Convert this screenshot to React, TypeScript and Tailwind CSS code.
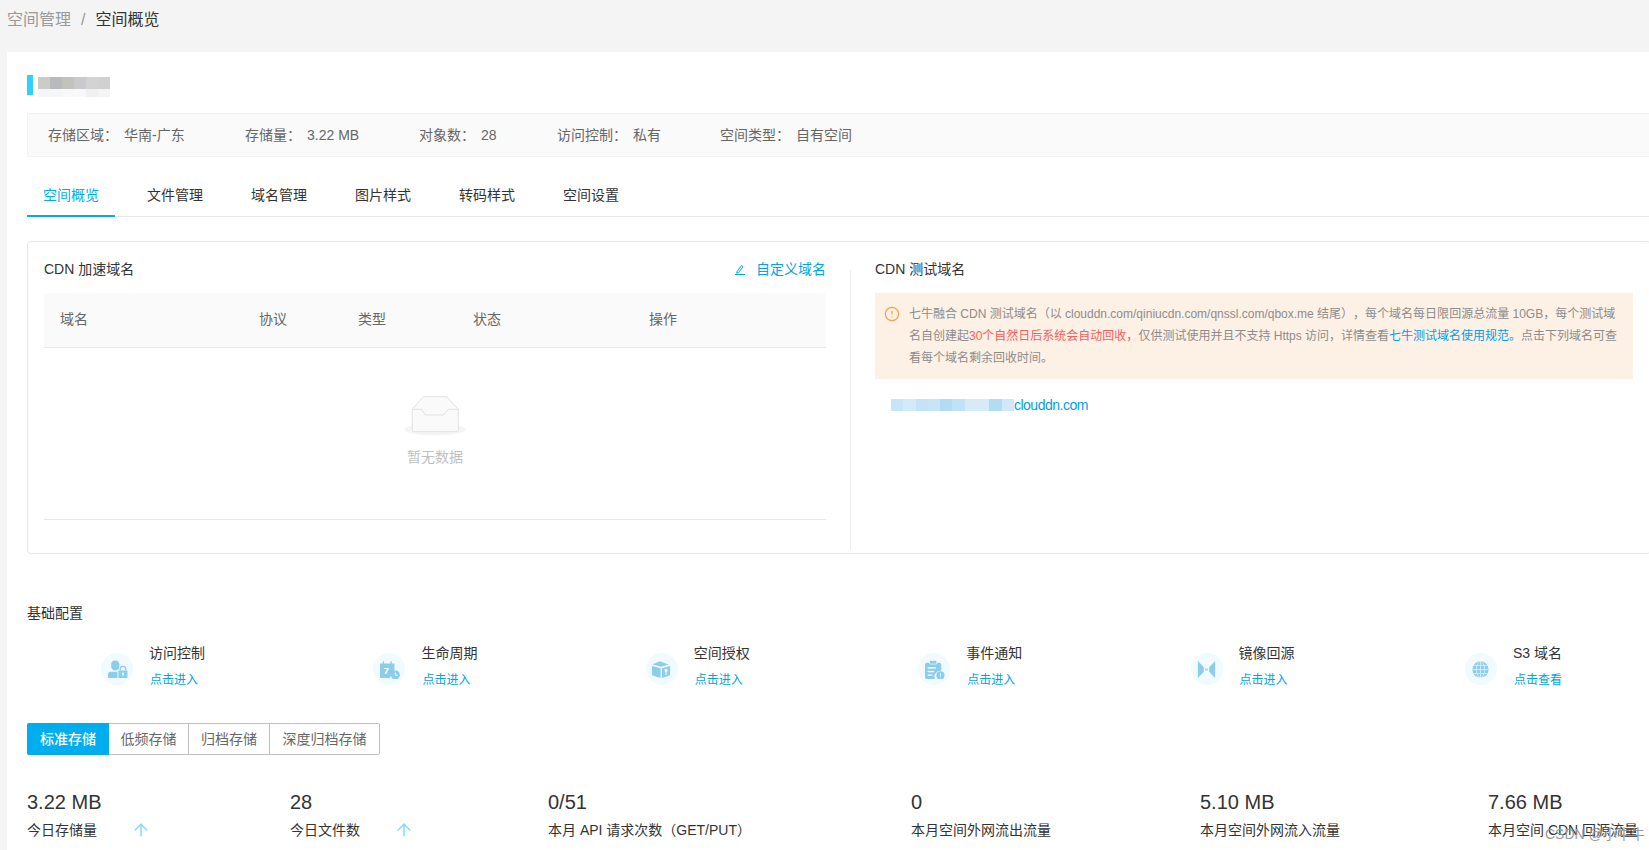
import { ArrowUp, CircleAlert } from 'lucide-react';
import type { ReactNode } from 'react';

const tabs = ['空间概览', '文件管理', '域名管理', '图片样式', '转码样式', '空间设置'];
const titleBlur = ['#cbcbc8', '#b9babc', '#c2c3bd', '#c8cacd', '#d3d3d3', '#d1d1d1'];
const titleBlurLow = ['#f3f5f7', '#f5f6f8', '#f8f8f8', '#f9f9f9', '#f0f0f0', '#f4f4f4'];
const domainBlur = ['#c8e4f7', '#d3eaf8', '#c5e3f6', '#c8e4f7', '#b3dcf4', '#c0e2f6', '#d5ebf8', '#d5ebf8', '#b4dbf4', '#d0e8f8'];

const ICON = '#8ccdec';

const configs: { title: string; link: string; icon: ReactNode }[] = [
  {
    title: '访问控制',
    link: '点击进入',
    icon: (
      <>
        <rect x="4.500" y="0.500" width="9" height="11" rx="4.500" fill={ICON} />
        <path d="M1 20v-4a3 3 0 0 1 3-3h7.500v7z" fill={ICON} />
        <path d="M14.500 11.500v-1.500a3 3 0 0 1 6 0v1.500" fill="none" stroke={ICON} strokeWidth="1.500" />
        <rect x="12.500" y="11.500" width="10" height="8.500" rx="1" fill={ICON} />
        <circle cx="17.500" cy="15" r="1.200" fill="#fff" />
        <rect x="17" y="15" width="1" height="3" fill="#fff" />
      </>
    ),
  },
  {
    title: '生命周期',
    link: '点击进入',
    icon: (
      <>
        <path d="M1 4h16v10.500a7 7 0 0 0-5 5.500H1z" fill={ICON} />
        <rect x="4" y="1.500" width="1.500" height="4" fill={ICON} />
        <rect x="12.500" y="1.500" width="1.500" height="4" fill={ICON} />
        <text x="5" y="16" fontSize="11" fontWeight="700" fill="#fff" fontFamily="Liberation Sans, sans-serif">7</text>
        <circle cx="18" cy="16.500" r="5" fill={ICON} />
        <path d="M18 13.800v3h2.500" fill="none" stroke="#fff" strokeWidth="1" />
      </>
    ),
  },
  {
    title: '空间授权',
    link: '点击进入',
    icon: (
      <>
        <path d="M1.500 5l8-3.500 10 3.500-8 2.500z" fill={ICON} />
        <path d="M1 6.500l9.500 2.500v11l-8-2.500a2 2 0 0 1-1.500-2z" fill={ICON} />
        <path d="M12 9l9-2.500v9a2 2 0 0 1-1.500 2l-7.500 2.500z" fill={ICON} />
        <circle cx="16.500" cy="11.500" r="1.700" fill="#fff" />
        <rect x="16" y="12" width="1" height="4.500" fill="#fff" />
      </>
    ),
  },
  {
    title: '事件通知',
    link: '点击进入',
    icon: (
      <>
        <path d="M3 3h14a2 2 0 0 1 2 2v7a6.500 6.500 0 0 0-7 9H3a2 2 0 0 1-2-2V5a2 2 0 0 1 2-2z" fill={ICON} />
        <rect x="6" y="0.500" width="8" height="4" rx="1" fill={ICON} stroke="#f0faff" strokeWidth="0.800" />
        <rect x="4" y="8" width="9" height="1.500" fill="#fff" />
        <rect x="4" y="12" width="7" height="1.500" fill="#fff" />
        <rect x="4" y="16" width="5" height="1.500" fill="#fff" />
        <circle cx="18" cy="17" r="4.500" fill={ICON} />
        <rect x="17.500" y="14.500" width="1" height="3" fill="#fff" />
        <rect x="17.500" y="18.200" width="1" height="1" fill="#fff" />
      </>
    ),
  },
  {
    title: '镜像回源',
    link: '点击进入',
    icon: (
      <>
        <path d="M2 1l6.500 7v5L2 20z" fill={ICON} />
        <path d="M21 1l-6.500 7v5l6.500 7z" fill={ICON} />
        <path d="M9.500 10.500l1.700-1.700v3.400z" fill={ICON} />
        <path d="M13.500 10.500l-1.700-1.700v3.400z" fill={ICON} />
      </>
    ),
  },
  {
    title: 'S3 域名',
    link: '点击查看',
    icon: (
      <>
        <circle cx="11.500" cy="10.500" r="9" fill={ICON} />
        <g stroke="#e4f4fb" strokeWidth="0.800" fill="none">
          <path d="M2.500 10.500h18M3.500 6h16M3.500 15h16M11.500 1.500v18" />
          <ellipse cx="11.500" cy="10.500" rx="4.500" ry="9" />
        </g>
      </>
    ),
  },
];

const stats: { value: string; label: string; arrow?: boolean }[] = [
  { value: '3.22 MB', label: '今日存储量', arrow: true },
  { value: '28', label: '今日文件数', arrow: true },
  { value: '0/51', label: '本月 API 请求次数（GET/PUT）' },
  { value: '0', label: '本月空间外网流出流量' },
  { value: '5.10 MB', label: '本月空间外网流入流量' },
  { value: '7.66 MB', label: '本月空间 CDN 回源流量' },
];

function InfoItem({ label, value, width }: { label: string; value: string; width: string }) {
  return (
    <div className={`flex text-[#666] ${width}`}>
      <span className="mr-[6px]">{label}：</span>
      <span>{value}</span>
    </div>
  );
}

export default function App() {
  return (
    <div
      className="relative w-[1649px] h-[850px] overflow-hidden bg-[#f4f4f4] text-sm leading-[22px] text-[#333]"
      style={{ fontFamily: '"Liberation Sans", "Noto Sans CJK SC", sans-serif' }}
    >
      {/* Breadcrumb */}
      <div className="h-[52px] pt-[9px] pl-[7px] flex text-base leading-[22px]">
        <span className="text-[#999]">空间管理</span>
        <span className="text-[#999] mx-[10px]">/</span>
        <span className="text-[#333]">空间概览</span>
      </div>

      <div className="ml-[7px] h-[798px] bg-white pl-[20px] pt-[23px]">
        {/* Bucket name, blurred */}
        <div className="flex h-[20px]">
          <div className="w-[6px] h-[20px] bg-[#2fd3f8]" />
          <div className="ml-[5px] mt-[2px]">
            <div className="flex">
              {titleBlur.map((c, i) => (
                <div key={i} className="w-[12px] h-[12px]" style={{ backgroundColor: c }} />
              ))}
            </div>
            <div className="flex">
              {titleBlurLow.map((c, i) => (
                <div key={i} className="w-[12px] h-[8px]" style={{ backgroundColor: c }} />
              ))}
            </div>
          </div>
        </div>

        {/* Bucket info */}
        <div className="mt-[18px] h-[44px] -mr-[2px] flex items-center pl-[20px] bg-[#fafafa] border border-[#f2f2f2]">
          <InfoItem label="存储区域" value="华南-广东" width="w-[197px]" />
          <InfoItem label="存储量" value="3.22 MB" width="w-[174px]" />
          <InfoItem label="对象数" value="28" width="w-[138px]" />
          <InfoItem label="访问控制" value="私有" width="w-[163px]" />
          <InfoItem label="空间类型" value="自有空间" width="w-[180px]" />
        </div>

        {/* Tabs */}
        <div className="mt-[16px] h-[44px] -mr-[2px] flex border-b border-[#e8e8e8]">
          {tabs.map((tab, i) => (
            <div
              key={tab}
              className={
                i === 0
                  ? 'h-[44px] shrink-0 px-[16px] mr-[16px] pt-[11px] border-b-2 border-[#00aeef] text-[#00aeef]'
                  : 'h-[44px] shrink-0 px-[16px] mr-[16px] pt-[11px] text-[#333]'
              }
            >
              {tab}
            </div>
          ))}
        </div>

        {/* CDN card */}
        <div className="mt-[24px] h-[313px] -mr-[2px] flex border border-[#e8e8e8] rounded">
          <div className="ml-[16px] w-[782px] pt-[16px]">
            <div className="flex justify-between">
              <span>CDN 加速域名</span>
              <span className="flex items-center text-[#00a4e8]">
                <svg viewBox="0 0 10 11" className="w-[10px] h-[11px] mr-[11px]" fill="none" stroke="currentColor" strokeWidth="1">
                  <path d="M2 7.500l4.500-6 1.500 1.200-4.500 6-1.800.500z" />
                  <path d="M0 10.500h10" />
                </svg>
                自定义域名
              </span>
            </div>
            <div className="mt-[13px] h-[55px] pb-[2px] flex items-center bg-[#fafafa] border-b border-[#e8e8e8] text-[#666]">
              <span className="ml-[16px] w-[199px]">域名</span>
              <span className="w-[99px]">协议</span>
              <span className="w-[115px]">类型</span>
              <span className="w-[176px]">状态</span>
              <span>操作</span>
            </div>
            <div className="h-[172px] border-b border-[#e8e8e8] flex flex-col items-center pt-[48px]">
              <svg viewBox="0 0 62 40" className="w-[62px] h-[40px]">
                <ellipse cx="31" cy="33.500" rx="31" ry="6" fill="#f5f5f5" />
                <path
                  d="M19.300.7h23.400l11.600 12.600v20.400a2 2 0 0 1-2 2H10.300a2 2 0 0 1-2-2V13.300z"
                  fill="#fafafa"
                  stroke="#e2e2e2"
                />
                <path d="M8.300 13.300h9.400l3.300 5.700h18.300l5-5.700h10" fill="none" stroke="#e2e2e2" />
              </svg>
              <span className="mt-[10px] text-[#bfbfbf]">暂无数据</span>
            </div>
          </div>

          <div className="ml-[24px] mt-[28px] w-px h-[280px] bg-[#eeeeee]" />

          <div className="ml-[24px] w-[758px] pt-[16px]">
            <div>CDN 测试域名</div>
            <div className="mt-[13px] h-[86px] flex bg-[#fdf1e6] pl-[9px] pt-[10px] text-xs leading-[22px] text-[#8c8c8c] [text-spacing-trim:space-all]">
              <CircleAlert className="w-[16px] h-[16px] mt-[3px] mr-[9px] shrink-0 text-[#f5a04a]" strokeWidth={1.8} />
              <div className="whitespace-nowrap">
                <div>七牛融合 CDN 测试域名（以 clouddn.com/qiniucdn.com/qnssl.com/qbox.me 结尾），每个域名每日限回源总流量 10GB，每个测试域</div>
                <div className="flex">
                  <span>名自创建起</span>
                  <span className="text-[#ff5a5a]">30个自然日后系统会自动回收，</span>
                  <span>仅供测试使用并且不支持 Https 访问，详情查看</span>
                  <span className="text-[#00a0e9]">七牛测试域名使用规范。</span>
                  <span>点击下列域名可查</span>
                </div>
                <div>看每个域名剩余回收时间。</div>
              </div>
            </div>
            <div className="mt-[15px] pl-[16px] flex items-center text-[#00a0e9]">
              <div className="flex">
                {domainBlur.map((c, i) => (
                  <div key={i} className="w-[12.300px] h-[12px]" style={{ backgroundColor: c }} />
                ))}
              </div>
              <span className="tracking-[-0.5px]">clouddn.com</span>
            </div>
          </div>
        </div>

        {/* Basic config */}
        <div className="mt-[48px]">基础配置</div>
        <div className="mt-[18px] grid grid-cols-[repeat(6,272.4px)]">
          {configs.map((c, i) => (
            <div key={c.title} className={i === 5 ? 'pl-[76px] flex' : 'pl-[74px] flex'}>
              <div className="mt-[11px] w-[32px] h-[32px] rounded-full bg-[#f0faff] flex items-center justify-center mr-[16px] shrink-0">
                <svg viewBox="0 0 23 21" className="w-[21px] h-[19px]">
                  {c.icon}
                </svg>
              </div>
              <div>
                <div>{c.title}</div>
                <div className="mt-[5px] ml-[1px] text-xs leading-[22px] text-[#00a4e8]">{c.link}</div>
              </div>
            </div>
          ))}
        </div>

        {/* Storage type */}
        <div className="mt-[32px] inline-flex h-[32px] border border-[#bfbfbf] rounded-xs align-top text-[#666]">
          <div className="-m-px h-[32px] w-[82px] flex items-center justify-center bg-[#00aeef] text-white font-medium rounded-l-xs">标准存储</div>
          <div className="w-[80px] flex items-center justify-center border-r border-[#bfbfbf] ml-[1px]">低频存储</div>
          <div className="w-[81px] flex items-center justify-center border-r border-[#bfbfbf]">归档存储</div>
          <div className="w-[109px] flex items-center justify-center">深度归档存储</div>
        </div>

        {/* Usage stats */}
        <div className="mt-[33px] grid grid-cols-[263px_258px_363px_289px_288px_1fr]">
          {stats.map((s) => (
            <div key={s.label}>
              <div className="text-xl leading-[28px]">{s.value}</div>
              <div className="mt-[3px] flex items-center whitespace-nowrap">
                {s.label}
                {s.arrow && <ArrowUp className="ml-[34px] w-[20px] h-[20px] text-[#7fdcf9]" strokeWidth={1.8} />}
              </div>
            </div>
          ))}
        </div>
      </div>

      {/* Watermark */}
      <div className="absolute left-[1545px] top-[823px] text-[#999] whitespace-nowrap">CSDN @小牛牛</div>
    </div>
  );
}
